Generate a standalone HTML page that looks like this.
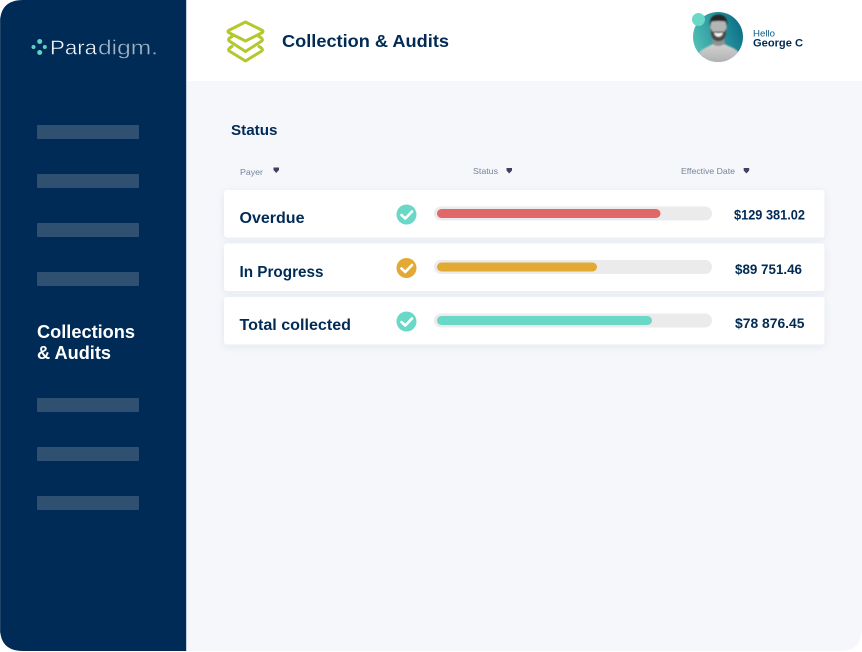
<!DOCTYPE html>
<html lang="en">
<head>
<meta charset="utf-8">
<title>Collection &amp; Audits</title>
<style>
html,body{margin:0;padding:0;background:#fff;width:862px;height:652px;overflow:hidden}
svg{display:block}
text{font-family:"Liberation Sans",sans-serif}
</style>
</head>
<body>
<svg width="862" height="652" viewBox="0 0 862 652" xmlns="http://www.w3.org/2000/svg">
<defs>
<clipPath id="frame"><path d="M23 0H862V629Q862 651 840 651H23Q0 651 0 628V23Q0 0 23 0Z"/></clipPath>
<clipPath id="av"><circle cx="718" cy="37" r="25"/></clipPath>
<linearGradient id="avg" x1="0" y1="0.7" x2="1" y2="0.3">
<stop offset="0" stop-color="#52c2b8"/><stop offset="1" stop-color="#0b6f88"/>
</linearGradient>
<linearGradient id="body" x1="0" y1="0" x2="0" y2="1">
<stop offset="0" stop-color="#d2d2d2"/><stop offset="1" stop-color="#b0b0b0"/>
</linearGradient>
<filter id="sh" x="-5%" y="-30%" width="110%" height="170%">
<feDropShadow dx="0" dy="2" stdDeviation="4" flood-color="#27385e" flood-opacity="0.07"/>
</filter>
<filter id="soft" x="-10%" y="-10%" width="120%" height="120%"><feGaussianBlur stdDeviation="0.7"/></filter>
</defs>

<g clip-path="url(#frame)">
<rect x="186" y="0" width="676" height="652" fill="#f5f7fb"/>
<rect x="186" y="0" width="676" height="81" fill="#ffffff"/>
<rect x="0" y="0" width="186" height="652" fill="#002b56"/>
<rect x="0" y="0" width="0.5" height="652" fill="#3d5c7c"/>
<rect x="186" y="0" width="0.5" height="652" fill="#8fa2b8"/>
</g>

<!-- Logo -->
<g fill="#5fd3c2">
<circle cx="39.700" cy="41.500" r="2.500"/>
<circle cx="33.500" cy="47" r="2"/>
<circle cx="44.800" cy="47" r="2"/>
<circle cx="39.700" cy="52.500" r="2.500"/>
</g>
<text x="50" y="54.500" font-size="20.500" fill="#f4f7fa" stroke="#002b56" stroke-width="0.4" textLength="47" lengthAdjust="spacingAndGlyphs">Para</text>
<text x="98" y="54.500" font-size="20.500" fill="#a3b4c6" stroke="#002b56" stroke-width="0.4" textLength="60" lengthAdjust="spacingAndGlyphs">digm.</text>

<!-- Sidebar items -->
<g fill="#2f5071">
<rect x="37" y="125" width="102" height="14" rx="1"/>
<rect x="37" y="174" width="102" height="14" rx="1"/>
<rect x="37" y="223" width="102" height="14" rx="1"/>
<rect x="37" y="272" width="102" height="14" rx="1"/>
<rect x="37" y="398" width="102" height="14" rx="1"/>
<rect x="37" y="447" width="102" height="14" rx="1"/>
<rect x="37" y="496" width="102" height="14" rx="1"/>
</g>
<text x="37" y="338" font-size="18" font-weight="700" fill="#ffffff" textLength="98" lengthAdjust="spacingAndGlyphs">Collections</text>
<text x="37" y="359" font-size="18" font-weight="700" fill="#ffffff" textLength="74" lengthAdjust="spacingAndGlyphs">&amp; Audits</text>

<!-- Layers icon -->
<g fill="none" stroke="#b4c82e" stroke-width="3" stroke-linejoin="round" stroke-linecap="round">
<path d="M232 46.500Q226.500 49.500 230 51.500L245.500 61L261 51.500Q264.500 49.500 259 46.500"/>
<path d="M232 36.500Q226.500 39.500 230 41.500L245.500 51.500L261 41.500Q264.500 39.500 259 36.500"/>
<path d="M229.500 30L245.500 22L261.500 30Q264.500 31.500 261.500 33L245.500 41L229.500 33Q226.500 31.500 229.500 30Z"/>
</g>

<text x="282" y="47" font-size="17.500" font-weight="700" fill="#012b55" textLength="167" lengthAdjust="spacingAndGlyphs">Collection &amp; Audits</text>

<!-- Avatar -->
<g clip-path="url(#av)">
<rect x="693" y="12" width="50" height="50" fill="url(#avg)"/>
<g filter="url(#soft)">
<path d="M695 63Q696 52 706 47.500L713 44Q718 46 724 44L732 47.500Q742 52 743 63Z" fill="url(#body)"/>
<path d="M712.500 36H724.500V44Q718.500 48 712.500 44Z" fill="#929292"/>
<ellipse cx="718.500" cy="28.500" rx="8.200" ry="12" fill="#b5b5b5"/>
<path d="M710.500 28Q710.500 37 714 40Q718.500 42.500 723 40Q726.500 37 726.500 28L724.500 31.500Q721.500 31.500 718.500 31.500Q715.500 31.500 712.500 31.500Z" fill="#4a4a4a"/>
<path d="M710 26Q708.500 15 718.500 14.500Q728.500 15 727 26L725.500 21.500Q719 20.500 711.500 21.500Z" fill="#262626"/>
<path d="M714 32.500Q718.500 33.800 723 32.500Q722 36.800 718.500 36.800Q715 36.800 714 32.500Z" fill="#f6f6f6"/>
</g>
</g>
<circle cx="698.500" cy="19.500" r="6.500" fill="#69d8c7"/>
<text x="753" y="36.500" font-size="8.800" fill="#0f5d86" textLength="22" lengthAdjust="spacingAndGlyphs">Hello</text>
<text x="753" y="46.500" font-size="11" font-weight="700" fill="#012b55" textLength="50" lengthAdjust="spacingAndGlyphs">George C</text>

<!-- Status heading -->
<text x="231" y="135" font-size="14.500" font-weight="700" fill="#012b55" textLength="46.500" lengthAdjust="spacingAndGlyphs">Status</text>

<!-- Table header -->
<g font-size="8.300" fill="#75839b">
<text x="240" y="175" textLength="23" lengthAdjust="spacingAndGlyphs">Payer</text>
<text x="473" y="174" textLength="25" lengthAdjust="spacingAndGlyphs">Status</text>
<text x="681" y="174" textLength="54" lengthAdjust="spacingAndGlyphs">Effective Date</text>
</g>
<g fill="#40405f">
<path d="M273.500 167.500H279V170L276.200 173L273.500 170Z"/>
<path d="M506.500 168H512V170.500L509.200 173.500L506.500 170.500Z"/>
<path d="M743.700 168H749.200V170.500L746.400 173.500L743.700 170.500Z"/>
</g>

<!-- Rows -->
<g fill="#ffffff" filter="url(#sh)">
<rect x="224" y="190" width="600.500" height="47.500" rx="3"/>
<rect x="224" y="243.500" width="600.500" height="47.500" rx="3"/>
<rect x="224" y="297" width="600.500" height="47.500" rx="3"/>
</g>

<g font-size="15.500" font-weight="700" fill="#012b55">
<text x="239.500" y="223" textLength="65" lengthAdjust="spacingAndGlyphs">Overdue</text>
<text x="239.500" y="277" textLength="84" lengthAdjust="spacingAndGlyphs">In Progress</text>
<text x="239.500" y="330" textLength="111.500" lengthAdjust="spacingAndGlyphs">Total collected</text>
</g>

<!-- Status icons -->
<circle cx="406.500" cy="214.500" r="10" fill="#69d8c7"/>
<circle cx="406.500" cy="268" r="10" fill="#e3a935"/>
<circle cx="406.500" cy="321.500" r="10" fill="#69d8c7"/>
<g fill="none" stroke="#ffffff" stroke-width="2.600" stroke-linecap="round" stroke-linejoin="round">
<path d="M401.500 215L405.300 218.500L412 211.500"/>
<path d="M401.500 268.500L405.300 272L412 265"/>
<path d="M401.500 322L405.300 325.500L412 318.500"/>
</g>

<!-- Progress bars -->
<g fill="#ebebeb">
<rect x="434" y="206.500" width="278" height="14" rx="7"/>
<rect x="434" y="260" width="278" height="14" rx="7"/>
<rect x="434" y="313.500" width="278" height="14" rx="7"/>
</g>
<rect x="437" y="209" width="223.500" height="9" rx="4.500" fill="#e06868"/>
<rect x="437" y="262.500" width="160" height="9" rx="4.500" fill="#e3a935"/>
<rect x="437" y="316" width="215" height="9" rx="4.500" fill="#69d8c7"/>

<!-- Amounts -->
<g font-size="13.500" font-weight="700" fill="#012b55">
<text x="734" y="219.500" textLength="71" lengthAdjust="spacingAndGlyphs">$129 381.02</text>
<text x="735" y="274" textLength="67" lengthAdjust="spacingAndGlyphs">$89 751.46</text>
<text x="735" y="328" textLength="69.500" lengthAdjust="spacingAndGlyphs">$78 876.45</text>
</g>
</svg>
</body>
</html>
